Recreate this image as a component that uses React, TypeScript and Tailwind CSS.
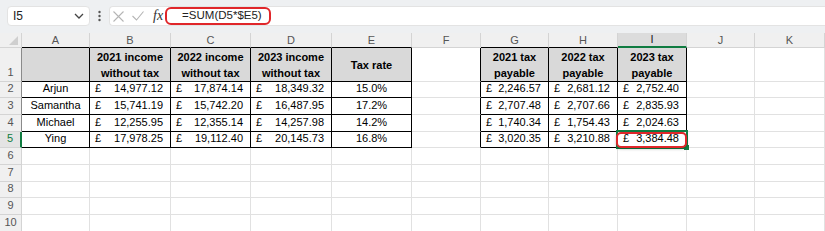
import React from 'react';

const COLS = ['A', 'B', 'C', 'D', 'E', 'F', 'G', 'H', 'I', 'J', 'K'];

type Row = { name: string; b: string; c: string; d: string; e: string; g: string; h: string; i: string };

const DATA: Row[] = [
  { name: 'Arjun', b: '14,977.12', c: '17,874.14', d: '18,349.32', e: '15.0%', g: '2,246.57', h: '2,681.12', i: '2,752.40' },
  { name: 'Samantha', b: '15,741.19', c: '15,742.20', d: '16,487.95', e: '17.2%', g: '2,707.48', h: '2,707.66', i: '2,835.93' },
  { name: 'Michael', b: '12,255.95', c: '12,355.14', d: '14,257.98', e: '14.2%', g: '1,740.34', h: '1,754.43', i: '2,024.63' },
  { name: 'Ying', b: '17,978.25', c: '19,112.40', d: '20,145.73', e: '16.8%', g: '3,020.35', h: '3,210.88', i: '3,384.48' },
];

const HEADERS: Record<number, string[]> = {
  0: [''],
  1: ['2021 income', 'without tax'],
  2: ['2022 income', 'without tax'],
  3: ['2023 income', 'without tax'],
  4: ['Tax rate'],
  6: ['2021 tax', 'payable'],
  7: ['2022 tax', 'payable'],
  8: ['2023 tax', 'payable'],
};

function Cur({ v }: { v: string }) {
  return (
    <div className="flex w-full items-end justify-between pl-[5px] pr-[7px]">
      <span>£</span>
      <span>{v}</span>
    </div>
  );
}

function inTable(r: number, c: number) {
  return r <= 5 && c !== 5 && c <= 8;
}

function cellClass(r: number, c: number) {
  const t = inTable(r, c);
  const rightBlack = r <= 5 && c <= 8;
  const right = rightBlack ? 'border-r-black' : 'border-r-[#e1e1e1]';
  const bottom = t ? 'border-b-black' : 'border-b-[#e1e1e1]';
  const bg = r === 1 && t ? 'bg-[#d9d9d9]' : 'bg-white';
  return `flex border-r border-b whitespace-nowrap ${right} ${bottom} ${bg}`;
}

function cellContent(r: number, c: number) {
  if (r === 1) {
    const h = HEADERS[c];
    if (!h || !h[0]) return null;
    return (
      <div className="flex h-full w-full flex-col items-center justify-center text-center font-bold leading-[16px]">
        {h.map((l, i) => (
          <span key={i}>{l}</span>
        ))}
      </div>
    );
  }
  if (r >= 2 && r <= 5) {
    const d = DATA[r - 2];
    switch (c) {
      case 0:
        return <div className="flex h-full w-full items-end justify-center pb-[1px]">{d.name}</div>;
      case 1:
        return <div className="flex h-full w-full items-end pb-[1px]"><Cur v={d.b} /></div>;
      case 2:
        return <div className="flex h-full w-full items-end pb-[1px]"><Cur v={d.c} /></div>;
      case 3:
        return <div className="flex h-full w-full items-end pb-[1px]"><Cur v={d.d} /></div>;
      case 4:
        return <div className="flex h-full w-full items-end justify-center pb-[1px]">{d.e}</div>;
      case 6:
        return <div className="flex h-full w-full items-end pb-[1px]"><Cur v={d.g} /></div>;
      case 7:
        return <div className="flex h-full w-full items-end pb-[1px]"><Cur v={d.h} /></div>;
      case 8:
        return <div className="flex h-full w-full items-end pb-[1px]"><Cur v={d.i} /></div>;
    }
  }
  return null;
}

function TopBar() {
  return (
    <div className="flex h-[33px] items-start bg-[#eef0f2] pl-[7px] pt-[6px]">
      <div className="flex h-[20px] w-[83px] items-center justify-between rounded-[4px] border border-[#e3e3e3] bg-white pl-[5px] pr-[5px] text-[12px] text-[#222]">
        <span>I5</span>
        <svg width="10" height="6" viewBox="0 0 10 6" className="text-[#444]">
          <path d="M1 1 L5 5 L9 1" fill="none" stroke="currentColor" strokeWidth="1.3" />
        </svg>
      </div>
      <div className="flex h-[20px] w-[19px] items-center justify-center">
        <svg width="3" height="12" viewBox="0 0 3 12">
          <circle cx="1.5" cy="2" r="1.2" fill="#555" />
          <circle cx="1.5" cy="6" r="1.2" fill="#555" />
          <circle cx="1.5" cy="10" r="1.2" fill="#555" />
        </svg>
      </div>
      <div className="flex h-[20px] flex-1 items-center rounded-l-[4px] border border-r-0 border-[#e3e3e3] bg-white">
        <svg width="11" height="11" viewBox="0 0 11 11" className="ml-[3px]">
          <path d="M0.5 0.5 L10.5 10.5 M10.5 0.5 L0.5 10.5" stroke="#b5b5b5" strokeWidth="1.1" fill="none" />
        </svg>
        <svg width="12" height="10" viewBox="0 0 12 10" className="ml-[8px]">
          <path d="M0.5 5 L4.5 9 L11.5 0.5" stroke="#b5b5b5" strokeWidth="1.1" fill="none" />
        </svg>
        <span className="ml-[9px] font-['Liberation_Serif',serif] text-[14px] italic leading-none text-[#333]">fx</span>
        <div className="ml-[2px] flex h-[18px] w-[106px] items-center rounded-[6px] border-2 border-[#e0262a] pl-[15px] text-[11.5px] text-[#222]">
          =SUM(D5*$E5)
        </div>
      </div>
    </div>
  );
}

export default function App() {
  const rows = [1, 2, 3, 4, 5, 6, 7, 8, 9, 10];
  return (
    <div className="h-[231px] w-[825px] overflow-hidden bg-white font-['Liberation_Sans',Arial,sans-serif] text-[11px] text-black">
      <TopBar />
      <div className="grid grid-cols-[22px_68px_81px_80px_81px_80px_69px_68px_69px_69px_68px_70px] grid-rows-[15px_34px_16px_17px_17px_16px_17px_17px_16px_17px_17px]">
        <div className="relative border-r border-b border-r-[#d4d4d4] border-b-[#d4d4d4] bg-[#f0f0f0]">
          <svg width="9" height="9" viewBox="0 0 9 9" className="absolute bottom-[2px] right-[3px]">
            <path d="M9 0 L9 9 L0 9 Z" fill="#cfcfcf" />
          </svg>
        </div>
        {COLS.map((l, c) => {
          const isSel = l === 'I';
          const tableCol = c !== 5 && c <= 8;
          const cls = isSel
            ? 'flex items-center justify-center border-r border-r-[#d4d4d4] border-b-2 border-b-[#107c41] bg-[#dcdcdc] text-[#222]'
            : tableCol
            ? 'flex items-center justify-center border-r border-r-[#d4d4d4] border-b border-b-black bg-[#f0f0f0] text-[#555]'
            : 'flex items-center justify-center border-r border-r-[#d4d4d4] border-b border-b-[#d4d4d4] bg-[#f0f0f0] text-[#555]';
          return (
            <div key={l} className={cls}>
              {l}
            </div>
          );
        })}
        {rows.map((r) => (
          <React.Fragment key={r}>
            <div
              className={
                r === 5
                  ? 'flex items-end justify-center border-r-2 border-b border-r-[#107c41] border-b-[#d4d4d4] bg-[#e4e4e4] pb-[1px] text-[#107c41]'
                  : r <= 4
                  ? 'flex items-end justify-center border-r border-b border-r-[#8a8a8a] border-b-[#d4d4d4] bg-[#f0f0f0] pb-[1px] text-[#555]'
                  : 'flex items-end justify-center border-r border-b border-r-[#d4d4d4] border-b-[#d4d4d4] bg-[#f0f0f0] pb-[1px] text-[#555]'
              }
            >
              {r}
            </div>
            {COLS.map((l, c) => (
              <div key={l} className={`${cellClass(r, c)} ${r === 5 && c === 8 ? 'relative' : 'overflow-hidden'}`}>
                {cellContent(r, c)}
                {r === 5 && c === 8 && (
                  <>
                    <div className="pointer-events-none absolute left-[-2px] top-[-2px] h-[19px] w-[72px] border-2 border-[#107c41]" />
                    <div className="pointer-events-none absolute bottom-[-3px] right-[-3px] h-[5px] w-[5px] bg-[#107c41]" />
                    <div className="pointer-events-none absolute left-[-2px] top-[0px] h-[16px] w-[71px] rounded-[5px] border-2 border-[#e0262a] shadow-[0_1px_3px_rgba(0,0,0,0.25)]" />
                  </>
                )}
              </div>
            ))}
          </React.Fragment>
        ))}
      </div>
    </div>
  );
}
